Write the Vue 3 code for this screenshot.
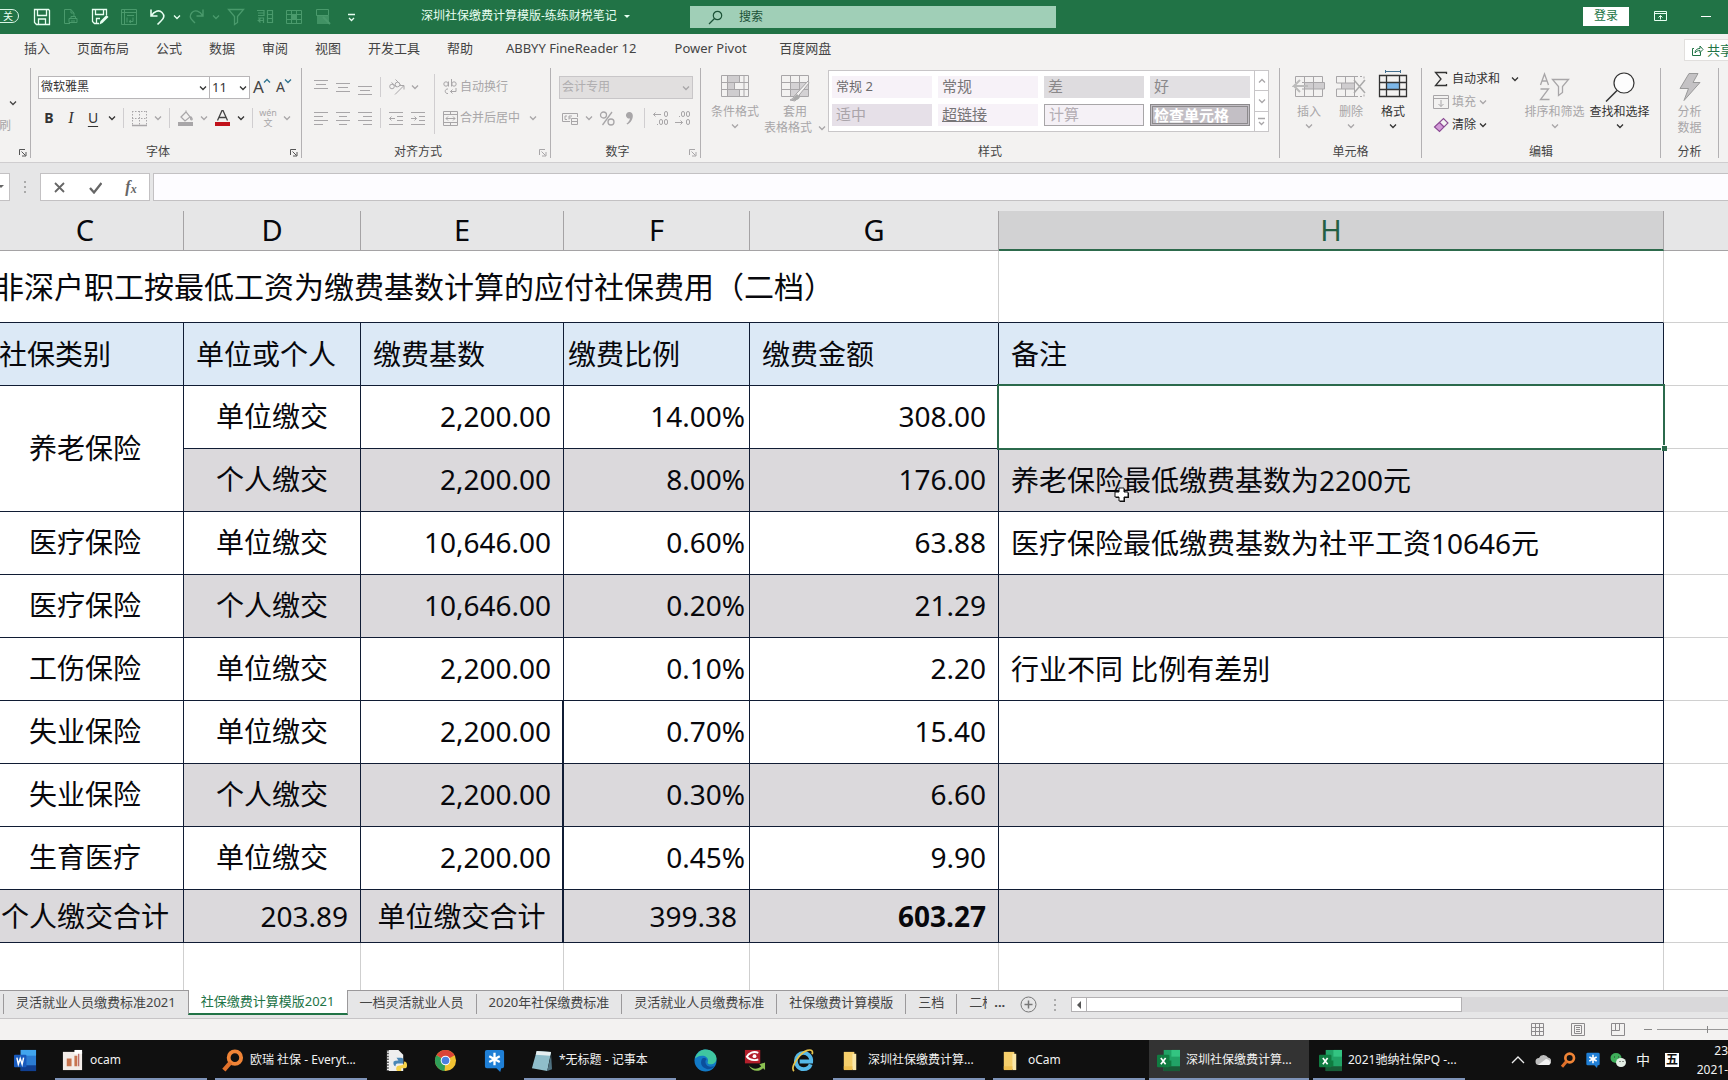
<script setup>
import { ref } from 'vue'

const chevron = '<path d="M1 1.500 4 4.500 7 1.500" fill="none" stroke="currentColor" stroke-width="1.300"/>'
const lines = (a) => a.map(([x1, x2, y]) => `<path d="M${x1} ${y}H${x2}" stroke="currentColor"/>`).join('')

const icons = {
  save: '<path d="M1.500 1.500h14l1 1v14H3.500l-2-2zM4.500 1.500v6h9v-6M5.500 16v-5h7v5" fill="none" stroke="currentColor" stroke-width="1.300"/>',
  newDoc: '<path d="M8 15.500H2.500V1.500H9l3 3.500v3M9 1.500V5h3M7 10.500h8v4H7zM9 10.500v-2h4.500v2M9 13h4" fill="none" stroke="currentColor"/>',
  saveAs: '<path d="M8 15.500H3.500l-2-2V1.500h14V7M4.500 1.500v5h8v-5M5.500 15v-4.500H9" fill="none" stroke="currentColor" stroke-width="1.300"/><path d="m8.500 16.500 1-3.500 6-6 2 2-6 6z" fill="currentColor"/>',
  pivot: '<path d="M1.500 1.500h15v15h-15zM1.500 4.500h15M4.500 1.500v15M7 7.500h7M7 9.500v5M13 9.500v4h-4M11 12l-2 1.500 2 1.500" fill="none" stroke="currentColor"/>',
  undo: '<path d="M2 1.500V8h6.500M2.500 7.500C5 3 10 1.500 13 4.500s2 6-1 8.500l-3.500 3.500" fill="none" stroke="currentColor" stroke-width="1.600"/>',
  redo: '<path d="M15 1.500V8H8.500M14.500 7.500C12 3 7 1.500 4 4.500s-2 6 1 8.500l2 2" fill="none" stroke="currentColor" stroke-width="1.400"/>',
  filter: '<path d="M1.500 1.500h15l-6 7v6l-3 2v-8z" fill="none" stroke="currentColor" stroke-width="1.300"/>',
  arrange: '<path d="M1 2.500h7v5H2M8 5H2M11.500 2v13M11.500 2.500h5v12h-5M11.500 6.500h5M11.500 10.500h5M2 10h5.500v5M7 12.500H2.500l2-2M2.500 12.500l2 2" fill="none" stroke="currentColor" stroke-width="1.200"/>',
  cells: '<path d="M1.500 2.500h15v13h-15zM1.500 6.500h15M1.500 11.500h15M6.500 2.500v13M11.500 2.500v13" fill="none" stroke="currentColor"/><path d="M7 7h5v4H7z" fill="currentColor"/>',
  view: '<path d="M2.500 1.500h12v6h-12z" fill="none" stroke="currentColor"/><path d="M3 8h12v8H3z" fill="currentColor" opacity=".8"/><path d="m9 9 7 7" stroke="currentColor" stroke-width="2"/>',
  custom: '<path d="M1 1.500h7M2 5l2.500 2.500L7 5" fill="none" stroke="currentColor" stroke-width="1.300"/>',
  search: '<circle cx="9.500" cy="5.500" r="4.200" fill="none" stroke="currentColor" stroke-width="1.200"/><path d="M6.500 8.500 1 14" stroke="currentColor" stroke-width="1.200"/>',
  ribbonOpt: '<path d="M.500.500h12v9H.500zM.500 2.500h12M6.500 8.500V4.500M4.500 6.500l2-2 2 2" fill="none" stroke="currentColor"/>',
  share: '<path d="M3 4.500H1.500v7h8V8M4 9c0-3 2-4.500 5-4.500V2l3 3.500-3 3V6.500C7 6.500 5.500 7 4 9z" fill="none" stroke="currentColor"/>',
  launcher: '<path d="M1.500 7V1.500H7M3.500 3.500l4 4M8 4v4H4" fill="none" stroke="currentColor"/>',
  borders: '<path d="M1 1.500h15M1 8.500h15M1.500 1v14M8.500 1v14M15.500 1v14" fill="none" stroke="currentColor" stroke-dasharray="1.500 1.500"/><path d="M1 15.500h15" stroke="currentColor" stroke-width="1.500"/>',
  bucket: '<path d="m4 7 5-5 4 5-5 4zM9 2V.500M14 7c2 2 1 3 .500 3S13 9 14 7z" fill="none" stroke="currentColor" stroke-width="1.200"/><path d="M1 12h15v4H1z" fill="currentColor"/>',
  fontColor: '<path d="M3.500 10.500 8 .500h1l4.500 10M5 7.500h7" fill="none" stroke="#444" stroke-width="1.300"/><path d="M1 12h15v4H1z" fill="#c1121b"/>',
  alTop: lines([[1, 15, 1.5], [3, 13, 5.5], [1, 15, 9.5]]),
  alMid: lines([[1, 15, 4.5], [3, 13, 8.5], [1, 15, 12.5]]),
  alBot: lines([[1, 15, 7.5], [3, 13, 11.5], [1, 15, 15.5]]),
  left: lines([[1, 15, 2.5], [1, 10, 6.5], [1, 15, 10.5], [1, 10, 14.5]]),
  center: lines([[1, 15, 2.5], [4, 12, 6.5], [1, 15, 10.5], [4, 12, 14.5]]),
  right: lines([[1, 15, 2.5], [6, 15, 6.5], [1, 15, 10.5], [6, 15, 14.5]]),
  outdent: lines([[1, 15, 2.5], [9, 15, 6.5], [9, 15, 10.5], [1, 15, 14.5]]) + '<path d="M7 8.500H1.500l2-2M1.500 8.500l2 2" fill="none" stroke="currentColor"/>',
  indent: lines([[1, 15, 2.5], [9, 15, 6.5], [9, 15, 10.5], [1, 15, 14.5]]) + '<path d="M1 8.500h5.500l-2-2M6.500 8.500l-2 2" fill="none" stroke="currentColor"/>',
  orient: '<g fill="none" stroke="currentColor"><circle cx="4" cy="7.500" r="2.300"/><path d="m3.500 3.500 5 4.500M7.500.500l5 5M7 15.500 15.500 7M12 6.500h4v4"/><circle cx="9.500" cy="5.500" r="2.300"/></g>',
  wrap: '<g fill="none" stroke="currentColor"><circle cx="4" cy="5" r="2.200"/><path d="M6.500 2.500v5M9.500 0v7.500M6 10a2.300 2.300 0 1 0 0 4.500M14 9v3.500H8.500l2-2M8.500 12.500l2 2"/><circle cx="12" cy="5" r="2.200"/></g>',
  merge: '<path d="M1.500 1.500h14v14h-14zM1.500 4.500h14M1.500 12.500h14M8.500 1.500v3M8.500 12.500v3M4 8.500h9M6 6.500l-2 2 2 2M11 6.500l2 2-2 2" fill="none" stroke="currentColor"/>',
  currency: '<path d="M8 11.500H.500v-8h15V7M5 6H3v3.500h2M7 9.500V6h3M7 8h2" fill="none" stroke="currentColor"/><path d="M9.500 8.500h6v6h-6zM9.500 11.500h6" fill="#f3f2f1" stroke="currentColor"/>',
  percent: '<circle cx="4.500" cy="5" r="3" fill="none" stroke="currentColor" stroke-width="1.300"/><circle cx="12" cy="12" r="3" fill="none" stroke="currentColor" stroke-width="1.300"/><path d="m13 2-9.500 13" stroke="currentColor" stroke-width="1.300"/>',
  comma: '<path d="M8.500 2a3.300 3.300 0 1 0 .500 6.500C8.500 11 7 12.500 5.500 13.500l.800 1C10 12.500 12 9 11.800 5.500 11.700 3.500 10.300 2 8.500 2z" fill="currentColor"/>',
  decInc: '<g fill="none" stroke="currentColor"><rect x="12.500" y="1.500" width="3" height="5" rx="1.500"/><rect x="7.500" y="9.500" width="3" height="5" rx="1.500"/><rect x="12.500" y="9.500" width="3" height="5" rx="1.500"/><path d="M9 4.500H1.500l2-2M1.500 4.500l2 2M5 14.500h1"/></g>',
  decDec: '<g fill="none" stroke="currentColor"><rect x="7.500" y="1.500" width="3" height="5" rx="1.500"/><rect x="12.500" y="1.500" width="3" height="5" rx="1.500"/><rect x="12.500" y="9.500" width="3" height="5" rx="1.500"/><path d="M1 12.500h7.500l-2-2M8.500 12.500l-2 2M5 6.500h1"/></g>',
  cond: '<path d="M7 1h12v7H14v7h5v7H7z" fill="#cfcdcf"/><path d="M1.500 1.500h27v21h-27zM1.500 8.500h27M1.500 15.500h27M7.500 1.500v21M14.500 8.500v7M19.500 1.500v7M19.500 15.500v7M24 1.500v21" fill="none" stroke="currentColor"/>',
  tableFmt: '<path d="M10 8h18v14H10z" fill="#d4d2d4"/><path d="M1.500 1.500h27v21h-27zM1.500 8.500h27M1.500 15.500h27M10.500 1.500v21M19.500 1.500v21" fill="none" stroke="currentColor"/><path d="m29 9-9 11-5 7-5-1c4-1 4-5 7-7L28 7z" fill="#f3f2f1" stroke="currentColor"/><path d="m17 20 3 3c-2 4-6 4-9 3 3-1 3-4 6-6z" fill="#aaa"/>',
  insert: '<path d="M12 9h20v6H12z" fill="#cfcdcf"/><path d="M3.500 9V2.500h27V9M3.500 15v7.500h27V15M12.500 2.500v20M21.500 2.500v20M10 8.500h22.500v6.500H10" fill="none" stroke="currentColor"/><path d="M16 12H2l6-6M2 12l6 6" fill="none" stroke="#bbb" stroke-width="2"/>',
  delete: '<path d="M8 9h12v6H8z" fill="#cfcdcf"/><path d="M22 2.500H2.500V9H20M2.500 9v-6.500M20 15H2.500v7.500H22M7.500 9v6M11.500 2.500V9M11.500 15v7.500M20.500 2.500v20" fill="none" stroke="currentColor"/><path d="M22 2.500h8V7M22 22.500h8V19" fill="none" stroke="currentColor" stroke-dasharray="2 2"/><path d="m20 6 11 13M31 6 20 19" stroke="#aaa" stroke-width="1.500"/>',
  format: '<path d="M8.500 12h13v7h-13z" fill="#7db7e8"/><path d="M1.500 5.500h27v21h-27zM1.500 12.500h27M1.500 19.500h27M8.500 5.500v21M21.500 5.500v21" fill="none" stroke="#333" stroke-width="1.300"/><path d="M7.500 1.500h15M7.500 0v3M22.500 0v3" fill="none" stroke="#44708f"/>',
  sigma: '<path d="M13.500 3V1.500H2.500L8 8l-5.500 6.500h11V13" fill="none" stroke="#333" stroke-width="1.300"/>',
  fill: '<path d="M.500 1.500h15v13H.500zM.500 4.500h15M8 6v6.500M5.500 10 8 12.500l2.500-2.500" fill="none" stroke="currentColor"/>',
  clear: '<path d="m1.500 10 5-5 5 4.500-5 5z" fill="#d39ad8"/><path d="m1.500 10 9-8.500 4.500 4.500-8.500 8.500zM6.500 5.500l4.500 4.500" fill="none" stroke="#8a4a93" stroke-width="1.100"/>',
  sort: '<path d="M1.500 13 5.500 2l4 11M3 9h5.500M1.500 17h8l-8 10.500h9M13.500 7.500h16l-6 7v6l-4 3v-9z" fill="none" stroke="currentColor" stroke-width="1.300"/>',
  find: '<circle cx="19" cy="11" r="10" fill="#fdfdfd" stroke="#333" stroke-width="1.200"/><path d="m12 18.500-11 11" stroke="#333" stroke-width="1.500"/>',
  bolt: '<path d="M11 1.500h9l-5 9h7L6 28.500l4.500-12H2z" fill="#c4c2c4" stroke="#999"/>',
  x: '<path d="m2 2 9 9M11 2l-9 9" stroke="#666" stroke-width="1.800"/>',
  check: '<path d="m1 7 4 4.500L12.500 2" fill="none" stroke="#666" stroke-width="2.300"/>',
  plus: '<circle cx="8.500" cy="8.500" r="7.500" fill="none" stroke="#777"/><path d="M4.500 8.500h8M8.500 4.500v8" stroke="#777" stroke-width="1.500"/>',
  vNormal: '<path d="M.500.500h12v12H.500zM.500 4.500h12M.500 8.500h12M4.500.500v12M8.500.500v12" fill="none" stroke="currentColor"/>',
  vPage: '<path d="M.500.500h13v12H.500zM3.500 2.500h7v8h-7zM5 4.500h4M5 6.500h4M5 8.500h4" fill="none" stroke="currentColor"/>',
  vBreak: '<path d="M.500.500h13v12H.500zM.500 7.500h8v-7M4.500.500v7" fill="none" stroke="currentColor"/>',
  word: '<path d="M7 1h16v22H7z" fill="#2b7cd3"/><path d="M7 1h16v6H7z" fill="#41a5ee"/><path d="M7 17h16v6H7z" fill="#103f91"/><rect y="6" width="13" height="13" rx="1" fill="#185abd"/><path d="m3 9 1.500 7L6.500 10l2 6L10 9" fill="none" stroke="#fff" stroke-width="1.500"/>',
  ocam: '<path d="M2 3h20v19H2z" fill="#f3ece8"/><path d="M14 1h8v4h-8z" fill="#fff"/><path d="M6 10h5v8H6zM14 7h3v11h-3z" fill="#c8744e"/><path d="M18.500 5v13" stroke="#a44" />',
  everything: '<circle cx="14.500" cy="9" r="6.500" fill="none" stroke="#f08436" stroke-width="4"/><path d="m10 14-7 8" stroke="#e0702a" stroke-width="4.500"/>',
  python: '<path d="M2 1h12l5 5v17H2z" fill="#eee"/><path d="M3 1v22" stroke="#555" stroke-width="2" stroke-dasharray="1.500 1.500"/><path d="M12 9h5q2 0 2 2v4h-6q-2 0-2 3-3-1-2-5 1-1 5-1z" fill="#4a86b5"/><path d="M20 13q3 0 3 4t-3 3h-3v3h-4q-2-1-1-4 1-2 5-2 3 0 3-4z" fill="#f6d24a"/>',
  chrome: '<circle cx="12" cy="12" r="11" fill="#f1c232"/><path d="M12 12 2.500 6.500A11 11 0 0 1 21.500 6.500z" fill="#db4437"/><path d="M12 12 2.500 6.500A11 11 0 0 0 11 23z" fill="#2f9e58"/><circle cx="12" cy="12" r="5" fill="#fff"/><circle cx="12" cy="12" r="4" fill="#4a7fe0"/>',
  star: '<path d="M4 1h16q2 0 2 2v15q0 2-2 2h-1l-1 4-4-4H4q-2 0-2-2V3q0-2 2-2z" fill="#1f7fd6"/><path d="M12 4v13M6.500 7.500l11 6M17.500 7.500l-11 6" stroke="#fff" stroke-width="2.400"/>',
  notepad: '<path d="m7 2 15 1-4 20-16-3z" fill="#8fbdca"/><path d="m7 2 15 1-1 4L6 6z" fill="#e6eef0"/><path d="m18 23 4-17 1 15z" fill="#4f7180"/>',
  edge: '<circle cx="12" cy="12" r="11.500" fill="#1279c6"/><path d="M1 10C3 3 8 .500 12 .500c7 0 11.500 5 11.500 9.500 0 4-3 6-6 6-2 0-4-1-3-3 1-4-3-6-6-6-4 0-6 2-7.500 3z" fill="#3fc6a0"/><path d="M8 11c-2 5 1 9 6 10 3 0 6-1 7-3-3 1-8 1-9-4-.500-2 1-3 1-3-1-2-4-2-5 0z" fill="#0b4f9c"/>',
  snag: '<path d="M2 1h16v14H2z" fill="#b31f2b"/><path d="M16 4C11 2 6 4 4 8c3 4 8 4 12 3" fill="none" stroke="#fff" stroke-width="2"/><circle cx="12" cy="7.500" r="2" fill="#fff"/><path d="M6 17c4 5 10 4 13 1l-2-2 6-2v8l-2-2c-4 4-12 4-15-3z" fill="#8cc152"/>',
  ie: '<path d="M19.500 16c-1 3-4 5-7.500 5-5 0-8-4-8-8.500S7.500 4 12 4s8.500 4 8 9H8" fill="none" stroke="#55b8e8" stroke-width="4"/><path d="M2 23C-2 19 8 4 16 1.500c5-1.500 6 1 5 4" fill="none" stroke="#e8c44c" stroke-width="1.800"/>',
  folder: '<path d="M5 3h11v18H5z" fill="#f6cf6b"/><path d="M14 5h4v17h-4z" fill="#fbe7a8"/><path d="M5 18h9v4H5z" fill="#f0c050"/>',
  excel: '<path d="M7 1h17v22H7z" fill="#21a366"/><path d="M15 1h9v7h-9z" fill="#33c481"/><path d="M7 12h8v6H7z" fill="#107c41"/><path d="M7 18h17v5H7z" fill="#185c37"/><rect y="6" width="13" height="13" rx="1" fill="#107c41"/><path d="m4 9.500 5 6.500M9 9.500 4 16" stroke="#fff" stroke-width="1.700"/>',
  caret: '<path d="m2 11 6-6 6 6" fill="none" stroke="#eee" stroke-width="1.300"/>',
  cloud: '<path d="M4 13a3.500 3.500 0 0 1 0-7 5 5 0 0 1 9-.500 3.800 3.800 0 0 1 0 7.500z" fill="#bdbdbd"/><path d="m3 13 8-6a4 4 0 0 1 4 5l-1 1z" fill="#f2f2f2"/>',
  wechat: '<ellipse cx="6" cy="6" rx="5.500" ry="5" fill="#3fae5a"/><ellipse cx="11" cy="10.500" rx="5" ry="4.500" fill="#e4efe6"/><path d="M4 5h1M8 5h1M9.500 9.500h1M12.500 9.500h1" stroke="#333" />',
}

const quick = [
  ['save', '保存'], ['newDoc', '新建', 1], ['saveAs', '另存为'], ['pivot', '数据透视表', 1],
  ['undo', '撤消', 0, 1], ['redo', '恢复', 1, 1], ['filter', '筛选', 1], ['arrange', '排列', 1], ['cells', '单元格', 1], ['view', '视图', 1],
]
const menu = ['插入', '页面布局', '公式', '数据', '审阅', '视图', '开发工具', '帮助', 'ABBYY FineReader 12', 'Power Pivot', '百度网盘']
const wide = { 'ABBYY FineReader 12': 'wide-l', 'Power Pivot': 'wide-s' }
const styleCells = [
  ['常规 2', 'plain small'], ['常规', 'plain'], ['差', 'bad'], ['好', 'good'],
  ['适中', 'neutral'], ['超链接', 'plain link'], ['计算', 'calc'], ['检查单元格', 'checkcell'],
]
const rows = [
  { c: '养老保险', span: 2, d: '单位缴交', e: '2,200.00', f: '14.00%', g: '308.00', h: '', sel: true },
  { d: '个人缴交', e: '2,200.00', f: '8.00%', g: '176.00', h: '养老保险最低缴费基数为2200元', cursor: true },
  { c: '医疗保险', d: '单位缴交', e: '10,646.00', f: '0.60%', g: '63.88', h: '医疗保险最低缴费基数为社平工资10646元' },
  { c: '医疗保险', d: '个人缴交', e: '10,646.00', f: '0.20%', g: '21.29', h: '' },
  { c: '工伤保险', d: '单位缴交', e: '2,200.00', f: '0.10%', g: '2.20', h: '行业不同 比例有差别' },
  { c: '失业保险', d: '单位缴交', e: '2,200.00', f: '0.70%', g: '15.40', h: '', thick: true },
  { c: '失业保险', d: '个人缴交', e: '2,200.00', f: '0.30%', g: '6.60', h: '', thick: true },
  { c: '生育医疗', d: '单位缴交', e: '2,200.00', f: '0.45%', g: '9.90', h: '', thick: true },
]
const sheets = ['灵活就业人员缴费标准2021', '社保缴费计算模版2021', '一档灵活就业人员', '2020年社保缴费标准', '灵活就业人员缴费标准', '社保缴费计算模版', '三档', '二档']
const active = ref(1)
const tasks = [
  { icons: ['word'] },
  { icon: 'ocam', text: 'ocam' },
  { icon: 'everything', text: '欧瑞 社保 - Everyt...' },
  { icons: ['python', 'chrome', 'star'] },
  { icon: 'notepad', text: '*无标题 - 记事本' },
  { icons: ['edge', 'snag', 'ie'] },
  { icon: 'folder', text: '深圳社保缴费计算...' },
  { icon: 'folder', text: 'oCam' },
  { icon: 'excel', text: '深圳社保缴费计算...', on: true },
  { icon: 'excel', text: '2021驰纳社保PQ -...' },
]
</script>

<template>
  <div class="app">
    <header class="titlebar">
      <button class="autosave">关</button>
      <div class="quick">
        <template v-for="q in quick" :key="q[0]">
          <button class="qbtn" :class="{ dim: q[2] }" :aria-label="q[1]"><svg width="18" height="18" v-html="icons[q[0]]" /></button>
          <button v-if="q[3]" class="qchev" :class="{ dim: q[2] }" aria-label="更多"><svg width="8" height="6" v-html="chevron" /></button>
        </template>
        <button class="qbtn" aria-label="自定义"><svg width="9" height="9" v-html="icons.custom" /></button>
      </div>
      <div class="doc">深圳社保缴费计算模版-练练财税笔记<i class="tri"></i></div>
      <label class="search">
        <svg width="15" height="15" v-html="icons.search" />
        <input type="text" placeholder="搜索" aria-label="搜索">
      </label>
      <div class="win">
        <button class="login">登录</button>
        <button class="wbtn" aria-label="功能区显示选项"><svg width="13" height="10" v-html="icons.ribbonOpt" /></button>
        <button class="wbtn" aria-label="最小化"><i class="min"></i></button>
      </div>
    </header>

    <nav class="menu">
      <button v-for="m in menu" :key="m" :class="wide[m]">{{ m }}</button>
      <button class="share"><svg width="13" height="13" v-html="icons.share" />共享</button>
    </nav>

    <section class="ribbon">
      <div class="group g-clip">
        <div class="body clip"><svg width="8" height="6" v-html="chevron" /><span>刷</span></div>
        <div class="foot"><span></span><button class="launch" aria-label="剪贴板"><svg width="9" height="9" v-html="icons.launcher" /></button></div>
      </div>

      <div class="group g-font">
        <div class="body rows">
          <div class="row">
            <span class="combo name"><select aria-label="字体"><option>微软雅黑</option></select><svg width="8" height="6" v-html="chevron" /></span>
            <span class="combo size"><select aria-label="字号"><option>11</option></select><svg width="8" height="6" v-html="chevron" /></span>
            <button class="ib grow">A<svg class="flip" width="8" height="6" v-html="chevron" /></button>
            <button class="ib shrink">A<svg width="8" height="6" v-html="chevron" /></button>
          </div>
          <div class="row">
            <button class="ib b">B</button><button class="ib i">I</button><button class="ib u">U</button>
            <button class="cv" aria-label="下划线选项"><svg width="8" height="6" v-html="chevron" /></button><i class="sep"></i>
            <button class="ib dis" aria-label="边框"><svg width="17" height="17" v-html="icons.borders" /></button>
            <button class="cv dis" aria-label="边框选项"><svg width="8" height="6" v-html="chevron" /></button><i class="sep"></i>
            <button class="ib dis" aria-label="填充颜色"><svg width="17" height="17" v-html="icons.bucket" /></button>
            <button class="cv dis" aria-label="填充选项"><svg width="8" height="6" v-html="chevron" /></button>
            <button class="ib" aria-label="字体颜色"><svg width="17" height="17" v-html="icons.fontColor" /></button>
            <button class="cv" aria-label="颜色选项"><svg width="8" height="6" v-html="chevron" /></button><i class="sep"></i>
            <button class="ib dis wen"><span>wén</span><span>文</span></button>
            <button class="cv dis" aria-label="拼音选项"><svg width="8" height="6" v-html="chevron" /></button>
          </div>
        </div>
        <div class="foot"><span>字体</span><button class="launch" aria-label="字体设置"><svg width="9" height="9" v-html="icons.launcher" /></button></div>
      </div>

      <div class="group g-align dis">
        <div class="body">
          <div class="rows">
            <div class="row">
              <button v-for="n in ['alTop', 'alMid', 'alBot']" :key="n" class="ib" :aria-label="n"><svg width="16" height="17" v-html="icons[n]" /></button>
              <i class="sep"></i>
              <button class="ib" aria-label="方向"><svg width="17" height="17" v-html="icons.orient" /></button>
              <button class="cv" aria-label="方向选项"><svg width="8" height="6" v-html="chevron" /></button>
            </div>
            <div class="row">
              <button v-for="n in ['left', 'center', 'right']" :key="n" class="ib" :aria-label="n"><svg width="16" height="17" v-html="icons[n]" /></button>
              <i class="sep"></i>
              <button v-for="n in ['outdent', 'indent']" :key="n" class="ib" :aria-label="n"><svg width="16" height="17" v-html="icons[n]" /></button>
            </div>
          </div>
          <i class="sep tall"></i>
          <div class="rows">
            <button class="row txt"><svg width="17" height="17" v-html="icons.wrap" />自动换行</button>
            <button class="row txt"><svg width="17" height="17" v-html="icons.merge" />合并后居中<svg class="far" width="8" height="6" v-html="chevron" /></button>
          </div>
        </div>
        <div class="foot"><span>对齐方式</span><button class="launch" aria-label="对齐设置"><svg width="9" height="9" v-html="icons.launcher" /></button></div>
      </div>

      <div class="group g-num dis">
        <div class="body rows">
          <div class="row"><span class="combo num"><select disabled aria-label="数字格式"><option>会计专用</option></select><svg width="8" height="6" v-html="chevron" /></span></div>
          <div class="row">
            <button class="ib" aria-label="会计格式"><svg width="17" height="17" v-html="icons.currency" /></button>
            <button class="cv" aria-label="会计选项"><svg width="8" height="6" v-html="chevron" /></button>
            <button class="ib" aria-label="百分比"><svg width="17" height="17" v-html="icons.percent" /></button>
            <button class="ib" aria-label="千位分隔"><svg width="17" height="17" v-html="icons.comma" /></button>
            <i class="sep"></i>
            <button class="ib" aria-label="增加小数"><svg width="17" height="17" v-html="icons.decInc" /></button>
            <button class="ib" aria-label="减少小数"><svg width="17" height="17" v-html="icons.decDec" /></button>
          </div>
        </div>
        <div class="foot"><span>数字</span><button class="launch" aria-label="数字设置"><svg width="9" height="9" v-html="icons.launcher" /></button></div>
      </div>

      <div class="group g-style">
        <div class="body">
          <button class="big dis w60"><svg width="30" height="28" v-html="icons.cond" />条件格式<svg width="8" height="6" v-html="chevron" /></button>
          <button class="big dis w60"><svg width="30" height="28" v-html="icons.tableFmt" />套用<span>表格格式<svg width="8" height="6" v-html="chevron" /></span></button>
          <div class="gallery">
            <div class="swatches"><button v-for="s in styleCells" :key="s[0]" :class="s[1]">{{ s[0] }}</button></div>
            <div class="gscroll">
              <button aria-label="上"><svg class="flip" width="8" height="6" v-html="chevron" /></button>
              <button aria-label="下"><svg width="8" height="6" v-html="chevron" /></button>
              <button aria-label="其他"><svg width="9" height="9" v-html="icons.custom" /></button>
            </div>
          </div>
        </div>
        <div class="foot"><span>样式</span></div>
      </div>

      <div class="group g-cell">
        <div class="body">
          <button class="big dis w42"><svg width="34" height="28" v-html="icons.insert" />插入<svg width="8" height="6" v-html="chevron" /></button>
          <button class="big dis w42"><svg width="34" height="28" v-html="icons.delete" />删除<svg width="8" height="6" v-html="chevron" /></button>
          <button class="big w42 raised"><svg width="30" height="28" v-html="icons.format" />格式<svg width="8" height="6" v-html="chevron" /></button>
        </div>
        <div class="foot"><span>单元格</span></div>
      </div>

      <div class="group g-edit">
        <div class="body">
          <div class="stack">
            <button class="txt"><svg width="16" height="16" v-html="icons.sigma" />自动求和<svg class="far" width="8" height="6" v-html="chevron" /></button>
            <button class="txt dis"><svg width="16" height="16" v-html="icons.fill" />填充<svg width="8" height="6" v-html="chevron" /></button>
            <button class="txt"><svg width="16" height="16" v-html="icons.clear" />清除<svg width="8" height="6" v-html="chevron" /></button>
          </div>
          <button class="big dis w64"><svg width="31" height="30" v-html="icons.sort" />排序和筛选<svg width="8" height="6" v-html="chevron" /></button>
          <button class="big w64"><svg width="30" height="30" v-html="icons.find" />查找和选择<svg width="8" height="6" v-html="chevron" /></button>
        </div>
        <div class="foot"><span>编辑</span></div>
      </div>

      <div class="group g-ana">
        <div class="body"><button class="big dis w58"><svg width="24" height="30" v-html="icons.bolt" />分析<span>数据</span></button></div>
        <div class="foot"><span>分析</span></div>
      </div>
    </section>

    <section class="formula">
      <div class="namebox"><i></i></div>
      <div class="dots"><i></i><i></i><i></i></div>
      <div class="fbtns">
        <button aria-label="取消"><svg width="13" height="13" v-html="icons.x" /></button>
        <button aria-label="输入"><svg width="13" height="13" v-html="icons.check" /></button>
        <button class="fx">f<sub>x</sub></button>
      </div>
      <input class="finput" type="text" aria-label="编辑栏">
    </section>

    <main class="sheet">
      <table>
        <colgroup><col class="cc"><col class="cd"><col class="ce"><col class="cf"><col class="cg"><col class="ch"><col></colgroup>
        <thead>
          <tr class="letters"><th>C</th><th>D</th><th>E</th><th>F</th><th>G</th><th class="cur">H</th><th class="last"></th></tr>
        </thead>
        <tbody>
          <tr class="title"><td colspan="5">非深户职工按最低工资为缴费基数计算的应付社保费用（二档）</td><td></td><td class="out"></td></tr>
          <tr class="head"><th>社保类别</th><th>单位或个人</th><th>缴费基数</th><th class="tight">缴费比例</th><th>缴费金额</th><th>备注</th><td class="out"></td></tr>
          <tr v-for="(r, i) in rows" :key="i" class="data" :class="{ alt: r.d === '个人缴交', thick: r.thick }">
            <td v-if="r.c" class="c kind" :rowspan="r.span || 1">{{ r.c }}</td>
            <td class="c">{{ r.d }}</td><td class="r e">{{ r.e }}</td><td class="r tight">{{ r.f }}</td><td class="r">{{ r.g }}</td>
            <td class="note">{{ r.h }}<i v-if="r.sel" class="selbox"></i>
              <svg v-if="r.cursor" class="cursor" width="16" height="16"><path d="M6 2h5v4h4v5h-4v4H6v-4H2V6h4z" fill="#111" /><path d="M5 1h5v4h4v5h-4v4H5v-4H1V5h4z" fill="#fff" stroke="#111" /></svg>
            </td>
            <td class="out"></td>
          </tr>
          <tr class="total thick"><td class="c">个人缴交合计</td><td class="r">203.89</td><td class="c e">单位缴交合计</td><td class="r">399.38</td><td class="r bold">603.27</td><td></td><td class="out"></td></tr>
          <tr class="blank"><td></td><td></td><td></td><td></td><td></td><td></td><td class="last"></td></tr>
        </tbody>
      </table>
    </main>

    <nav class="sheets">
      <div class="tabs">
        <button v-for="(s, i) in sheets" :key="s" :class="{ on: i === active, cut: i === 7 }" @click="active = i">{{ s }}</button>
      </div>
      <span class="more">...</span>
      <button class="add" aria-label="新工作表"><svg width="17" height="17" v-html="icons.plus" /></button>
      <div class="dots"><i></i><i></i><i></i></div>
      <div class="hscroll"><button aria-label="向左滚动"><i></i></button><div class="thumb"></div></div>
    </nav>

    <footer class="status">
      <button aria-label="普通"><svg width="14" height="13" v-html="icons.vNormal" /></button>
      <button aria-label="页面布局"><svg width="14" height="13" v-html="icons.vPage" /></button>
      <button aria-label="分页预览"><svg width="14" height="13" v-html="icons.vBreak" /></button>
      <i class="zminus"></i><div class="zoom"><i></i></div>
    </footer>

    <footer class="taskbar">
      <template v-for="(t, i) in tasks" :key="i">
        <div v-if="t.icons" class="pins"><button v-for="n in t.icons" :key="n" :aria-label="n"><svg width="23" height="23" viewBox="0 0 24 24" v-html="icons[n]" /></button></div>
        <button v-else class="task" :class="{ on: t.on }"><svg width="23" height="23" viewBox="0 0 24 24" v-html="icons[t.icon]" /><span>{{ t.text }}</span></button>
      </template>
      <div class="tray">
        <svg width="16" height="16" v-html="icons.caret" />
        <svg width="16" height="16" v-html="icons.cloud" />
        <svg width="16" height="16" viewBox="0 0 24 24" v-html="icons.everything" />
        <svg width="16" height="16" viewBox="0 0 24 24" v-html="icons.star" />
        <svg width="16" height="16" v-html="icons.wechat" />
        <span class="ime">中</span>
        <span class="wubi">五</span>
        <div class="clock"><span>23</span><span>2021-</span></div>
      </div>
    </footer>
  </div>
</template>

<style>
body { margin: 0; }
</style>

<style scoped>
.app { min-height: 100vh; display: flex; flex-direction: column; overflow: hidden; background: #fff; color: #333; font: 12px/16px "Noto Sans", "Noto Sans CJK SC", sans-serif; }
* { box-sizing: border-box; }
button, input, select { font: inherit; color: inherit; background: none; border: 0; padding: 0; margin: 0; white-space: nowrap; }
svg { flex: none; display: block; }
i { font-style: normal; }
.dis { color: #a8a6a8; }

.titlebar { height: 34px; background: #217346; color: #e8fff2; display: flex; align-items: center; overflow: hidden; padding-bottom: 2px; }
.autosave { width: 22px; height: 14px; margin-left: -3px; border: 1px solid #d8f5e4; border-radius: 0 8px 8px 0; font-size: 10px; line-height: 12px; }
.quick { width: 402px; padding: 2px 0 0 8px; display: flex; align-items: center; }
.qbtn { width: 29px; height: 24px; display: flex; align-items: center; justify-content: center; }
.qchev { width: 10px; display: flex; align-items: center; justify-content: center; }
.quick .dim { color: #4a9a6c; }
.doc { display: flex; align-items: center; gap: 7px; width: 269px; white-space: nowrap; }
.tri { border: 3px solid transparent; border-top-color: #e8fff2; border-bottom: 0; }
.search { width: 366px; height: 22px; margin-top: 2px; background: #a0cfb7; color: #1c5237; display: flex; align-items: center; gap: 16px; padding-left: 18px; }
.search input { flex: 1; min-width: 0; outline: 0; }
.search input::placeholder { color: #1c5237; opacity: 1; }
.win { margin-left: auto; display: flex; align-items: center; }
.login { width: 46px; height: 19px; background: #fff; color: #217346; margin-right: 9px; }
.wbtn { width: 45px; height: 24px; display: flex; align-items: center; justify-content: center; }
.min { width: 10px; height: 1px; background: #fff; }

.menu { height: 34px; background: #f3f2f1; display: flex; align-items: center; padding: 0 0 6px 11px; color: #444; font-size: 13px; overflow: hidden; }
.menu button { padding: 0 13px; flex: none; margin-right: 1px; }
.menu .wide-l { width: 168px; padding: 0; }
.menu .wide-s { width: 109px; padding: 0; }
.menu .share { margin: 4px -6px 0 auto; height: 22px; width: 50px; padding: 0 0 0 6px; background: #fff; border: 1px solid #e1dfdd; color: #217346; display: flex; align-items: center; gap: 3px; }

.ribbon { background: #f3f2f1; border-bottom: 1px solid #cfcdcf; height: 95px; display: flex; overflow: hidden; }
.group { height: 90px; border-right: 1px solid #b3b1b3; display: flex; flex-direction: column; flex: none; }
.g-clip { width: 31px; } .g-font { width: 271px; } .g-align { width: 249px; } .g-num { width: 150px; }
.g-style { width: 579px; } .g-cell { width: 142px; } .g-edit { width: 239px; } .g-ana { width: 58px; }
.body { height: 74px; display: flex; flex: none; }
.rows { display: flex; flex-direction: column; padding-top: 7px; gap: 7px; }
.row { height: 24px; display: flex; align-items: center; }
.foot { height: 16px; display: flex; align-items: center; flex: none; padding-top: 4px; color: #444; }
.foot span { flex: 1; text-align: center; }
.launch { width: 17px; margin-right: -1px; display: flex; justify-content: center; color: #555; }
.dis .launch { color: #a8a6a8; }
.clip { flex-direction: column; padding: 32px 0 0 9px; color: #444; }
.clip span { margin: 12px 0 0 -10px; color: #a8a6a8; }
.g-font .body { padding-left: 7px; }
.combo { position: relative; height: 23px; display: flex; }
.combo select { appearance: none; width: 100%; border: 1px solid #b8b6b8; background: #fff; padding: 0 2px; color: #333; opacity: 1; border-radius: 0; }
.combo svg { position: absolute; right: 3px; top: 9px; pointer-events: none; }
.combo.name { width: 172px; } .combo.size { width: 41px; margin-left: -1px; } .combo.num { width: 134px; }
.combo.size select { font-size: 13px; }
.combo.num select { background: #e1dfdf; border-color: #c8c6c8; color: #b0aeb0; }
.grow, .shrink { color: #444; }
.grow { font-size: 17px; } .shrink { font-size: 14px; }
.grow svg, .shrink svg { color: #2f7390; margin: 0 -2px 12px -1px; }
.ib { width: 22px; height: 24px; display: flex; align-items: center; justify-content: center; flex: none; }
.b { font-weight: 700; font-size: 14px; } .i { font: italic 16px "Liberation Serif", serif; } .u { font-size: 14px; text-decoration: underline; text-underline-offset: 3px; }
.cv { width: 15px; height: 24px; display: flex; align-items: center; justify-content: center; flex: none; }
.sep { width: 1px; height: 20px; margin: 0 4px; background: #d0ced0; flex: none; }
.sep.tall { height: 60px; margin: 6px 7px 0 1px; }
.wen { flex-direction: column; font-size: 9px; line-height: 10px; }
.g-align .body { padding-left: 8px; }
.g-align .rows:first-child { width: 123px; }
.txt { display: flex; align-items: center; gap: 3px; }
.row.txt { gap: 1px; }
.far { margin-left: 8px; }
.g-num .body { padding-left: 8px; }
.g-style .body { padding-left: 4px; }
.big { display: flex; flex-direction: column; align-items: center; padding-top: 6px; gap: 1px; flex: none; }
.big > svg:first-child { margin-bottom: 1px; }
.big > svg:last-child { margin-top: 2px; }
.big span { display: flex; align-items: center; gap: 6px; margin: -1px -6px 0; }
.w60 { width: 60px; } .w42 { width: 42px; } .w64 { width: 65px; } .w58 { width: 57px; }
.big svg[height="30"] { margin: -2px 0 1px; }
.raised > svg:first-child { margin: -4px 0 5px; }
.gallery { display: flex; width: 441px; height: 62px; margin: 2px 0 0 3px; border: 1px solid #c8c6c8; background: #fff; }
.swatches { display: grid; grid-template-columns: repeat(4, 100px); gap: 6px; padding: 5px 3px; width: 425px; }
.swatches button { height: 22px; text-align: left; padding-left: 4px; font-size: 15px; line-height: 18px; color: #8a888a; padding-bottom: 2px; }
.swatches .plain { background: #f7f2f8; color: #777577; } .swatches .small { font-size: 13px; color: #6c6a6c; }
.swatches .bad { background: #dedcdf; } .swatches .good { background: #e2e0e3; } .swatches .neutral { background: #e6e0e8; color: #aaa4aa; }
.swatches .link { text-decoration: underline; }
.swatches .calc { background: #f5f1f6; border: 1px solid #a8a6a8; color: #b4aeb4; }
.swatches .checkcell { background: #c3bfc5; border: 3px double #8c8a8c; color: #fff; font-weight: 700; padding: 0 0 0 1px; line-height: 14px; }
.gscroll { flex: 1; display: flex; flex-direction: column; border-left: 1px solid #c8c6c8; color: #a8a6a8; }
.gscroll button { flex: 1; display: flex; align-items: center; justify-content: center; }
.gscroll button + button { border-top: 1px solid #c8c6c8; }
.flip { transform: rotate(180deg); }
.g-cell .body { padding-left: 8px; }
.stack { width: 100px; padding: 3px 0 0 11px; display: flex; flex-direction: column; gap: 7px; }

.formula { height: 48px; background: #e6e6e7; padding: 10px 0; display: flex; }
.namebox { width: 10px; height: 28px; background: #fff; border: 1px solid #c3c1c3; border-left: 0; padding-top: 11px; }
.namebox i { display: block; width: 3px; border: 3px solid transparent; border-top-color: #666; margin-left: -2px; }
.dots { display: flex; flex-direction: column; justify-content: center; gap: 3px; width: 30px; align-items: center; }
.dots i { width: 2px; height: 2px; background: #aaa; }
.fbtns { width: 110px; height: 28px; background: #fff; border: 1px solid #c3c1c3; display: flex; }
.fbtns button { flex: 1; display: flex; align-items: center; justify-content: center; }
.fbtns .fx { font: italic 700 16px "Liberation Serif", serif; color: #666; display: block; }
.fx sub { font-size: 12px; vertical-align: -1px; }
.finput { flex: 1; min-width: 0; height: 28px; margin-left: 3px; background: #fdfcff; border: 1px solid #c3c1c3; border-right: 0; outline: 0; padding: 0 6px; }

.sheet { flex: 1; overflow: hidden; }
table { table-layout: fixed; width: calc(100% + 13px); margin-left: -13px; border-collapse: separate; border-spacing: 0; font-size: 28px; line-height: 40px; color: #08080c; }
.cc { width: 197px; } .cd { width: 177px; } .ce { width: 203px; } .cf { width: 186px; } .cg { width: 249px; } .ch { width: 665px; }
td, th { padding: 0 12px; border-right: 1px solid #101c34; border-bottom: 1px solid #101c34; white-space: nowrap; font-weight: 400; text-align: left; }
.letters th { height: 40px; line-height: 36px; text-align: center; font-size: 29px; background: #e6e6e7; border-color: #a5a3a5; padding: 0 0 2px; }
.letters .cur { background: #d2d2d3; color: #245f43; border-bottom: 2px solid #2d6a4c; padding-bottom: 1px; }
.letters .last, .blank .last, td.out { border-right: 0; }
.title td { height: 72px; font-size: 30px; border-right-color: #cfcfcf; padding-left: 7px; }
.head th, .head td { height: 63px; }
.head th { background: #dce9f6; }
.data td { height: 63px; padding-bottom: 2px; }
.data .note { padding-bottom: 0; }
.alt td, .total td { background: #dbd9dc; }
.alt .kind { background: #fff; }
.total td { height: 53px; }
.data td.out, td.out { background: #fff; border-bottom-color: #d0d0d0; }
.c { text-align: center; padding: 0; }
.r { text-align: right; }
.tight { padding: 0 4px; }
.thick .e { border-right-width: 2px; }
.thick .r.e { padding-right: 11px; }
.bold { font-weight: 700; }
.blank td { height: 47px; border-color: #cfcfcf; border-bottom: 0; }
.note { position: relative; }
.selbox { position: absolute; inset: -2px; border: 2px solid #2b6a4c; z-index: 1; }
.selbox::after { content: ""; position: absolute; right: -4px; bottom: -3px; width: 5px; height: 5px; background: #2b6a4c; border: 1px solid #fff; border-width: 1px 0 0 1px; }
.cursor { position: absolute; left: 115px; top: 38px; }

.sheets { height: 29px; background: #e6e6e7; border-top: 1px solid #9b999b; border-bottom: 1px solid #c6c4c6; display: flex; align-items: center; font-size: 13px; color: #444; }
.tabs { display: flex; height: 100%; padding-left: 3px; flex: none; }
.tabs button { padding: 0 12px 4px; margin: 3px 0 4px; border-left: 1px solid #9b999b; flex: none; line-height: 16px; }
.tabs .on { margin: -1px 0 3px; padding-top: 3px; background: #fff; color: #217346; border-bottom: 2px solid #217346; border-right: 1px solid #9b999b; }
.tabs .on + button { border-left: 0; }
.tabs .cut { width: 31px; padding-right: 0; overflow: hidden; text-align: left; }
.more { width: 29px; padding: 0 0 5px 7px; font-weight: 700; line-height: 16px; }
.add { width: 24px; display: flex; justify-content: center; }
.hscroll { flex: 1; height: 15px; margin-left: 1px; background: #d9d8da; display: flex; }
.hscroll button { width: 16px; background: #fff; border: 1px solid #b3b1b3; display: flex; align-items: center; justify-content: center; }
.hscroll button i { border: 4px solid transparent; border-right-color: #555; border-left: 0; }
.thumb { width: 57%; background: #fff; border: 1px solid #b3b1b3; border-left: 0; }

.status { height: 21px; background: #f3f2f1; display: flex; align-items: center; justify-content: flex-end; color: #8c8a8c; }
.status button { width: 40px; display: flex; justify-content: center; }
.zminus { width: 8px; height: 1px; background: #888; margin: 0 5px 0 6px; }
.zoom { width: 71px; height: 1px; background: #999; position: relative; }
.zoom i { position: absolute; left: 50px; top: -3px; width: 1px; height: 7px; background: #888; }

.taskbar { height: 40px; background: #101010; color: #f2f2f2; display: flex; overflow: hidden; }
.pins { display: flex; padding: 0 1px; flex: none; }
.pins button { width: 49px; display: flex; align-items: center; justify-content: center; }
.task { width: 152px; margin: 0 4px; padding: 2px 6px 0; border-bottom: 2px solid #7e93b8; display: flex; align-items: center; gap: 6px; flex: none; overflow: hidden; }
.task.on { width: 160px; background: #333; margin: 0; padding-left: 8px; }
.tray { margin-left: auto; display: flex; align-items: center; gap: 9px; flex: none; }
.ime { font-size: 14px; width: 16px; text-align: center; }
.wubi { width: 14px; height: 14px; margin-left: 5px; background: #fff; color: #111; font-size: 12px; line-height: 14px; font-weight: 700; text-align: center; }
.clock { width: 40px; display: flex; flex-direction: column; align-items: flex-end; line-height: 19px; }
</style>
